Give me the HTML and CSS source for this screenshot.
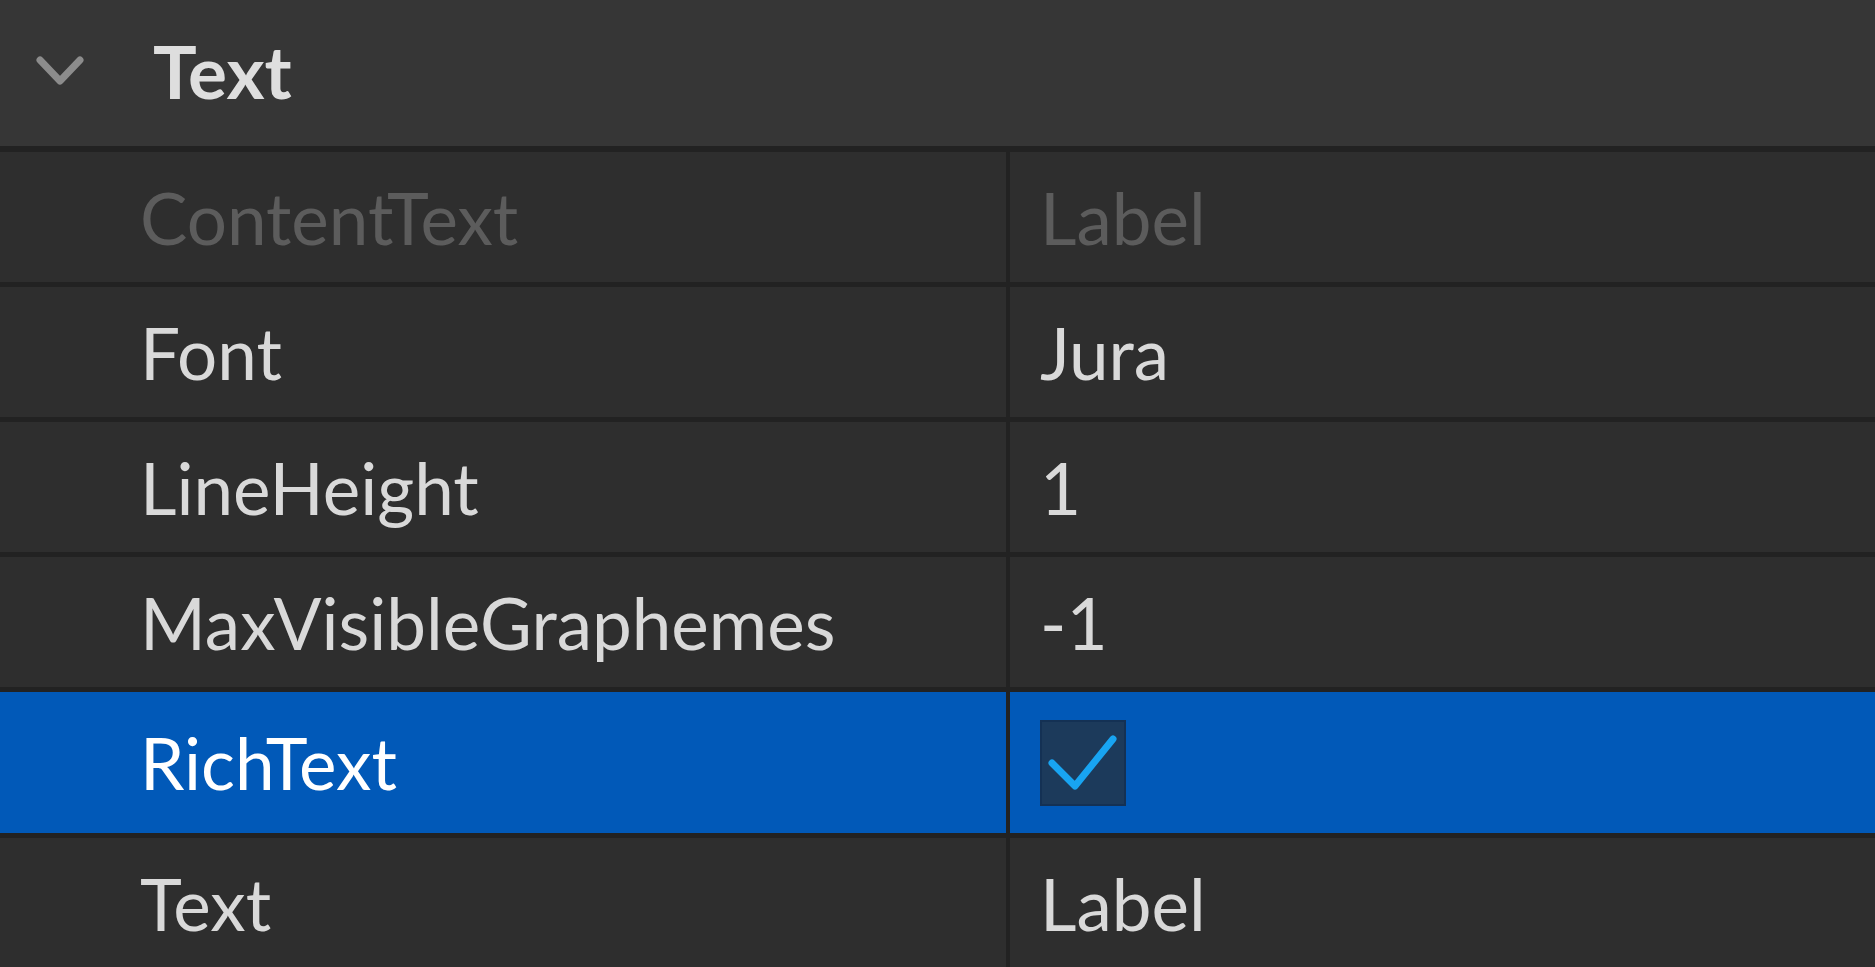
FILE: index.html
```html
<!DOCTYPE html>
<html lang="en">

<head>
    <meta charset="UTF-8">
    <meta name="viewport" content="width=device-width, initial-scale=1.0">
    <title>Properties - Text</title>
    <link rel="stylesheet" href="styles.css">
</head>

<body>

    <div class="properties">
        <!-- section header -->
        <div class="section-header">
            <svg class="chevron" width="54" height="36" viewBox="0 0 54 36">
                <polyline points="7,7 27,28 47,7" fill="none" stroke="#8c8c8c" stroke-width="7" stroke-linejoin="round" stroke-linecap="round" />
            </svg>
            <span class="section-title">Text</span>
        </div>

        <div class="prop-row disabled">
            <div class="prop-name">ContentText</div>
            <div class="prop-value">Label</div>
        </div>

        <div class="prop-row">
            <div class="prop-name">Font</div>
            <div class="prop-value">Jura</div>
        </div>

        <div class="prop-row">
            <div class="prop-name">LineHeight</div>
            <div class="prop-value">1</div>
        </div>

        <div class="prop-row">
            <div class="prop-name">MaxVisibleGraphemes</div>
            <div class="prop-value">-1</div>
        </div>

        <div class="prop-row selected">
            <div class="prop-name">RichText</div>
            <div class="prop-value">
                <span class="checkbox">
                    <svg width="82" height="82" viewBox="2 2 82 82">
                        <polyline points="12,43 35,66 73,19" fill="none" stroke="#18a4f2" stroke-width="7" stroke-linejoin="round" stroke-linecap="round" />
                    </svg>
                </span>
            </div>
        </div>

        <div class="prop-row">
            <div class="prop-name">Text</div>
            <div class="prop-value">Label</div>
        </div>
    </div>

</body>

</html>
```

FILE: styles.css
```css
body {
    margin: 0;
    background-color: #2e2e2e;
    font-family: Lato, "Open Sans", sans-serif;
    color: #d9d9d9;
    overflow: hidden;
}

.properties {
    width: 100%;
}

.section-header {
    height: 146px;
    background-color: #363636;
    border-bottom: 6px solid #222222;
    display: flex;
    align-items: center;
    padding-left: 33px;
}

.chevron {
    margin-right: 66px;
    margin-top: -4px;
}

.section-title {
    font-size: 73px;
    font-weight: bold;
    color: #dedede;
    margin-top: -4px;
}

.prop-row {
    display: grid;
    grid-template-columns: 1010px 1fr;
    height: 130px;
    border-bottom: 5px solid #222222;
    font-size: 71px;
}

.prop-name {
    display: flex;
    align-items: center;
    padding-left: 140px;
    border-right: 4px solid #222222;
}

.prop-value {
    display: flex;
    align-items: center;
    padding-left: 30px;
}

.disabled {
    color: #5c5c5c;
}

.selected {
    height: 141px;
    background-color: #0159b8;
    color: #ffffff;
}

.checkbox {
    width: 82px;
    height: 82px;
    background-color: #1c3a5b;
    border: 2px solid #143154;
    display: flex;
    align-items: center;
    justify-content: center;
}
```
